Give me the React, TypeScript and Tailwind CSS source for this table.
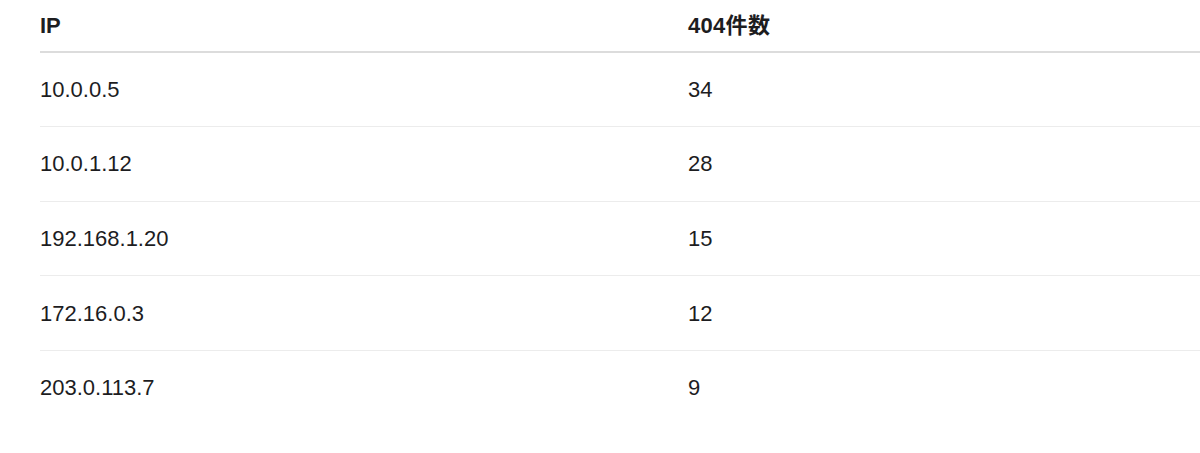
import React from 'react';

const rows = [
  { ip: '10.0.0.5', count: 34 },
  { ip: '10.0.1.12', count: 28 },
  { ip: '192.168.1.20', count: 15 },
  { ip: '172.16.0.3', count: 12 },
  { ip: '203.0.113.7', count: 9 },
];

export default function App() {
  return (
    <div
      className="h-[453px] w-full overflow-hidden bg-white pl-10 text-[#1d1d1f]"
      style={{ fontFamily: '"Liberation Sans", "Noto Sans CJK JP", sans-serif' }}
    >
      <table className="w-full border-collapse text-left text-[22px]">
        <thead>
          <tr className="h-[52px] border-b-2 border-[#dcdcdc]">
            <th className="w-[648px] p-0 font-bold">IP</th>
            <th className="p-0 font-bold tracking-[0.3px]">404件数</th>
          </tr>
        </thead>
        <tbody>
          {rows.map((row, i) => (
            <tr
              key={row.ip}
              className={`h-[74.6px] ${i < rows.length - 1 ? 'border-b border-[#ececec]' : ''}`}
            >
              <td className="p-0">{row.ip}</td>
              <td className="p-0">{row.count}</td>
            </tr>
          ))}
        </tbody>
      </table>
    </div>
  );
}
